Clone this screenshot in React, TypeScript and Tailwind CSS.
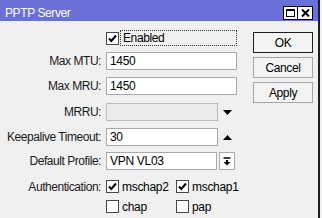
import React from "react";

const font = { fontFamily: '"Liberation Sans", Arial, sans-serif' };

function Check({ checked }: { checked: boolean }) {
  return (
    <div className="w-[13px] h-[13px] border border-[#474747] bg-white flex items-center justify-center shrink-0">
      {checked && (
        <svg width="11" height="11" viewBox="0 0 11 11">
          <path d="M2 5.5 L4.3 8 L9 2.5" stroke="#000" strokeWidth="2" fill="none" />
        </svg>
      )}
    </div>
  );
}

function Label({ children }: { children: React.ReactNode }) {
  return (
    <div className="w-[101px] text-right text-[12px] tracking-[-0.45px] text-[#1a1a1a] shrink-0 leading-none">
      {children}
    </div>
  );
}

function Input({ value, w, disabled }: { value?: string; w: string; disabled?: boolean }) {
  return (
    <div
      className={
        "h-[18px] border flex items-center pl-[3px] text-[12px] tracking-[-0.3px] text-black leading-none " +
        w +
        (disabled ? " bg-[#ebebeb] border-[#bcbcbc]" : " bg-white border-[#a9a9a9]")
      }
    >
      {value}
    </div>
  );
}

function Btn({ children, def }: { children: React.ReactNode; def?: boolean }) {
  return (
    <div
      className={
        "h-[21px] w-[60px] flex items-center justify-center text-[12px] tracking-[-0.4px] text-black leading-none bg-[#f3f3f3] border " +
        (def ? "border-[#1e1e1e]" : "border-[#a6a6a6]")
      }
    >
      {children}
    </div>
  );
}

export default function App() {
  return (
    <div className="w-[322px] h-[218px] bg-[#f0f0f0] overflow-hidden" style={font}>
      <div className="w-[320px] h-[218px] border-r-2 border-[#1e1e1e] flex flex-col">
        <div className="h-[21px] bg-[#6a70d8] flex shrink-0">
          <div className="text-white text-[12px] tracking-[-0.4px] pl-[5px] pt-[7px] leading-none">PPTP Server</div>
          <div className="ml-auto mr-[5px] mt-[6px] flex">
            <div className="w-[15px] h-[14px] bg-white border border-black flex items-center justify-center">
              <div className="w-[9px] h-[8px] border border-black border-t-2"></div>
            </div>
            <div className="w-[15px] h-[14px] bg-white border border-black border-l-0 flex items-center justify-center">
              <svg width="9" height="8" viewBox="0 0 9 8">
                <path d="M1 0.5 L8 7.5 M8 0.5 L1 7.5" stroke="#000" strokeWidth="2" />
              </svg>
            </div>
          </div>
        </div>
        <div className="flex flex-1">
          <div className="w-[253px] flex flex-col">
            <div className="flex items-center mt-[9px] h-[16px]">
              <div className="w-[106px] shrink-0"></div>
              <Check checked />
              <div className="ml-[1px] w-[117px] h-[16px] border border-dotted border-[#333] flex items-center pl-[2px] text-[12px] tracking-[-0.4px] leading-none text-black">
                Enabled
              </div>
            </div>
            <div className="flex items-center mt-[6px]">
              <Label>Max MTU:</Label>
              <div className="ml-[5px]"><Input value="1450" w="w-[131px]" /></div>
            </div>
            <div className="flex items-center mt-[7px]">
              <Label>Max MRU:</Label>
              <div className="ml-[5px]"><Input value="1450" w="w-[131px]" /></div>
            </div>
            <div className="flex items-center mt-[8px]">
              <Label>MRRU:</Label>
              <div className="ml-[5px]"><Input w="w-[112px]" disabled /></div>
              <svg className="ml-[5px]" width="9" height="5" viewBox="0 0 9 5">
                <path d="M0 0 L9 0 L4.5 5 Z" fill="#000" />
              </svg>
            </div>
            <div className="flex items-center mt-[7px]">
              <Label>Keepalive Timeout:</Label>
              <div className="ml-[5px]"><Input value="30" w="w-[112px]" /></div>
              <svg className="ml-[5px]" width="9" height="5" viewBox="0 0 9 5">
                <path d="M0 5 L9 5 L4.5 0 Z" fill="#000" />
              </svg>
            </div>
            <div className="flex items-center mt-[6px]">
              <Label>Default Profile:</Label>
              <div className="ml-[5px]"><Input value="VPN VL03" w="w-[111px]" /></div>
              <div className="ml-[2px] w-[16px] h-[18px] bg-white border border-[#a9a9a9] flex items-center justify-center">
                <svg width="8" height="9" viewBox="0 0 8 9">
                  <path d="M0.5 1 L7.5 1" stroke="#000" strokeWidth="1.5" />
                  <path d="M3 3 L5 3 L5 5 L7.5 5 L4 8.5 L0.5 5 L3 5 Z" fill="#000" />
                </svg>
              </div>
            </div>
            <div className="flex items-center mt-[10px] h-[13px]">
              <Label>Authentication:</Label>
              <div className="ml-[5px] w-[70px] flex items-center">
                <Check checked />
                <span className="ml-[3px] text-[12px] tracking-[-0.3px] leading-none text-black">mschap2</span>
              </div>
              <div className="flex items-center">
                <Check checked />
                <span className="ml-[3px] text-[12px] tracking-[-0.3px] leading-none text-black">mschap1</span>
              </div>
            </div>
            <div className="flex items-center mt-[7px] h-[13px]">
              <div className="w-[106px] shrink-0"></div>
              <div className="w-[70px] flex items-center">
                <Check checked={false} />
                <span className="ml-[3px] text-[12px] tracking-[-0.3px] leading-none text-black">chap</span>
              </div>
              <div className="flex items-center">
                <Check checked={false} />
                <span className="ml-[3px] text-[12px] tracking-[-0.3px] leading-none text-black">pap</span>
              </div>
            </div>
          </div>
          <div className="flex flex-col gap-[4px] mt-[11px]">
            <Btn def>OK</Btn>
            <Btn>Cancel</Btn>
            <Btn>Apply</Btn>
          </div>
        </div>
      </div>
    </div>
  );
}
